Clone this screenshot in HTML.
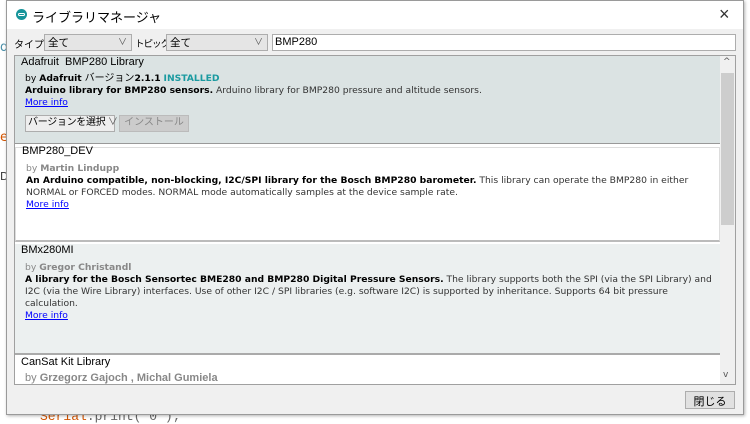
<!DOCTYPE html>
<html><head><meta charset="utf-8"><style>
*{margin:0;padding:0;box-sizing:border-box}
body{width:750px;height:421px;overflow:hidden;background:#fff;position:relative;font-family:"DejaVu Sans","Liberation Sans","Noto Sans CJK JP",sans-serif}
.ab{position:absolute;white-space:nowrap}
.jp{font-family:"Liberation Sans","Noto Sans CJK JP",sans-serif}
.dlg{left:6px;top:0;width:738px;height:415px;background:#f0f0f0;border:1px solid #9a9a9a;box-shadow:1px 1px 3px rgba(0,0,0,.3)}
.tb{left:0;top:0;width:736px;height:28px;background:#fff}
.sel{background:#e5e5e5;border:1px solid #adadad;height:17px;font-size:10.5px;padding:1px 3px;line-height:14px}
.sel i{position:absolute;right:4px;top:0;font-style:normal;font-size:9px;color:#555}
.list{left:14px;top:55px;width:722px;height:330px;border:1px solid #a0a0a0;background:#fff;overflow:hidden}
.it{position:absolute;left:0;width:705px;font-size:9.2px;line-height:11.5px;color:#000;white-space:nowrap}
.it .t{position:absolute;left:6px;top:1px;font-family:"Liberation Sans",sans-serif;font-size:11px}
.it .c{position:absolute;left:10px;white-space:nowrap}
.g{color:#888}
b{font-weight:bold}
a{color:#00f;text-decoration:underline}
.desc{color:#333}
</style></head><body>
<div class="ab" style="left:0;top:40px;font-size:13px;color:#4a8fa8">d</div>
<div class="ab" style="left:0;top:130px;font-size:13px;color:#d35400">e</div>
<div class="ab" style="left:0;top:170px;font-size:11px;color:#333">D</div>
<div class="ab" style="left:40px;top:409px;font-family:'Liberation Mono',monospace;font-size:13px;color:#d35400">Serial<span style="color:#666">.print("0");</span></div>
<div class="ab dlg">
 <div class="ab tb"></div>
 <div class="ab" style="left:9px;top:8px;width:11px;height:11px;border-radius:50%;background:#16949a"></div>
 <div class="ab" style="left:11px;top:12px;width:7px;height:3px;border:1px solid #fff;border-radius:2px"></div>
 <div class="ab jp" style="left:25px;top:6px;font-size:13px;color:#000">ライブラリマネージャ</div>
 <div class="ab" style="left:712px;top:3px;font-size:18px;color:#333;font-family:'Liberation Sans'">×</div>
 <div class="ab jp" style="left:7px;top:35px;font-size:10px">タイプ</div>
 <div class="ab sel jp" style="left:37px;top:33px;width:88px">全て<i>∨</i></div>
 <div class="ab jp" style="left:128px;top:35px;font-size:9.5px;letter-spacing:-1px">トピック</div>
 <div class="ab sel jp" style="left:159px;top:33px;width:102px">全て<i>∨</i></div>
 <div class="ab" style="left:265px;top:33px;width:464px;height:17px;background:#fff;border:1px solid #adadad;font-family:'Liberation Sans';font-size:11px;padding:1px 2px">BMP280</div>
</div>
<div class="ab list">
 <div class="it" style="top:0;height:88px;background:#dbe3e3;border-bottom:1px solid #999">
  <div class="t">Adafruit&nbsp; BMP280 Library</div>
  <div class="c" style="top:17px">by <b>Adafruit</b> <span class="jp" style="font-size:10px">バージョン</span><b>2.1.1</b> <b style="color:#1a9aa0">INSTALLED</b></div>
  <div class="c" style="top:29px"><b>Arduino library for BMP280 sensors.</b> <span class="desc">Arduino library for BMP280 pressure and altitude sensors.</span></div>
  <div class="c" style="top:41px"><a>More info</a></div>
  <div class="c jp" style="left:10px;top:59px;width:90px;height:17px;border:1px solid #adadad;background:#eee;font-size:10px;padding:1px 2px;letter-spacing:-0.3px">バージョンを選択 <span style="color:#555">∨</span></div>
  <div class="c jp" style="left:104px;top:59px;width:70px;height:17px;border:1px solid #bbb;background:#ccc;color:#888;font-size:10px;text-align:center;padding-top:1px">インストール</div>
 </div>
 <div class="it" style="top:91px;height:95px;background:#fff;border:1px solid #ddd;border-bottom:2px solid #bbb">
  <div class="t" style="top:-2px">BMP280_DEV</div>
  <div class="c g" style="top:15px">by <b>Martin Lindupp</b></div>
  <div class="c" style="top:27px"><b>An Arduino compatible, non-blocking, I2C/SPI library for the Bosch BMP280 barometer.</b> <span class="desc">This library can operate the BMP280 in either</span></div>
  <div class="c desc" style="top:39px">NORMAL or FORCED modes. NORMAL mode automatically samples at the device sample rate.</div>
  <div class="c" style="top:51px"><a>More info</a></div>
 </div>
 <div class="it" style="top:188px;height:111px;background:#ecf0f0;border-bottom:2px solid #aaa">
  <div class="t">BMx280MI</div>
  <div class="c g" style="top:18px">by <b>Gregor Christandl</b></div>
  <div class="c" style="top:30px"><b>A library for the Bosch Sensortec BME280 and BMP280 Digital Pressure Sensors.</b> <span class="desc">The library supports both the SPI (via the SPI Library) and</span></div>
  <div class="c desc" style="top:42px">I2C (via the Wire Library) interfaces. Use of other I2C / SPI libraries (e.g. software I2C) is supported by inheritance. Supports 64 bit pressure</div>
  <div class="c desc" style="top:54px">calculation.</div>
  <div class="c" style="top:66px"><a>More info</a></div>
 </div>
 <div class="it" style="top:300px;height:30px;background:#fff">
  <div class="t">CanSat Kit Library</div>
  <div class="c g" style="top:17px;font-family:'Liberation Sans';font-size:11px">by <b>Grzegorz Gajoch , Michal Gumiela</b></div>
 </div>
 <div class="ab" style="left:705px;top:0;width:15px;height:328px;background:#f0f0f0"></div>
 <div class="ab" style="left:706px;top:17px;width:13px;height:152px;background:#cdcdcd"></div>
 <div class="ab" style="left:708px;top:1px;font-size:9px;color:#555">^</div>
 <div class="ab" style="left:708px;top:314px;font-size:9px;color:#555">v</div>
</div>
<div class="ab jp" style="left:685px;top:391px;width:50px;height:18px;border:1px solid #adadad;background:#e1e1e1;font-size:11px;text-align:center;padding-top:1px">閉じる</div>
</body></html>
